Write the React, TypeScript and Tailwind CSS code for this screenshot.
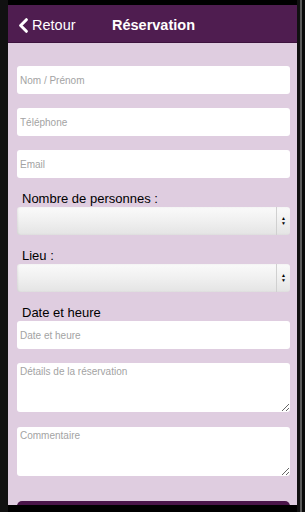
import { ChevronLeft } from "lucide-react";

function Field({ placeholder }: { placeholder: string }) {
  return (
    <input
      placeholder={placeholder}
      className="h-[28px] w-full shrink-0 rounded-[3px] bg-white px-[3px] text-[10px] text-gray-700 placeholder:text-[#a3a3a3] outline-none"
    />
  );
}

function Area({ placeholder }: { placeholder: string }) {
  return (
    <textarea
      placeholder={placeholder}
      className="h-[49px] w-full shrink-0 resize-y rounded-[3px] bg-white px-[3px] py-[2px] text-[10px] leading-[13px] text-gray-700 placeholder:text-[#a3a3a3] outline-none"
    />
  );
}

function Select() {
  return (
    <div className="flex h-[28px] w-full shrink-0 overflow-hidden rounded-[3px] bg-gradient-to-b from-[#fafafa] via-[#f0f0f0] to-[#e4e4e4] shadow-[inset_1px_0_2px_rgba(0,0,0,0.08)]">
      <div className="flex-1" />
      <div className="flex w-[14px] flex-col items-center justify-center border-l border-[#d0d0d0] text-[5px] leading-[5px] text-black">
        <span>▲</span>
        <span>▼</span>
      </div>
    </div>
  );
}

export default function App() {
  return (
    <div className="flex h-[512px] w-[305px] overflow-hidden bg-black font-['Liberation_Sans',Arial,sans-serif]">
      <div className="w-[8px] shrink-0 bg-[#111]" />
      <div className="flex w-[289px] shrink-0 flex-col">
        <div className="h-[5px] shrink-0 bg-black" />
        {/* Barre de titre */}
        <div className="relative flex h-[38px] shrink-0 items-center border-b border-[#3d123e] bg-[#4f1d50] pt-[4px]">
          <div className="flex items-center pl-[4px] text-white">
            <ChevronLeft size={23} strokeWidth={3.2} className="-mr-[3px]" />
            <span className="text-[14.5px] leading-none">Retour</span>
          </div>
          <span className="absolute left-[104px] text-[14.5px] font-bold text-white">Réservation</span>
        </div>
        {/* Formulaire */}
        <div className="flex min-h-0 flex-1 flex-col overflow-hidden bg-[#dfcde0] pl-[9px] pr-[7px] pt-[23px]">
          <div className="flex shrink-0 flex-col gap-[14px]">
            <Field placeholder="Nom / Prénom" />
            <Field placeholder="Téléphone" />
            <Field placeholder="Email" />
          </div>
          <label className="mt-[12px] shrink-0 pl-[5px] text-[13px] leading-[17px] text-black">Nombre de personnes :</label>
          <Select />
          <label className="mt-[12px] shrink-0 pl-[5px] text-[13px] leading-[17px] text-black">Lieu :</label>
          <Select />
          <label className="mt-[12px] shrink-0 pl-[5px] text-[13px] leading-[17px] text-black">Date et heure</label>
          <Field placeholder="Date et heure" />
          <div className="mt-[14px] flex shrink-0 flex-col gap-[15px]">
            <Area placeholder="Détails de la réservation" />
            <Area placeholder="Commentaire" />
          </div>
          <div className="mt-[25px] h-[10px] shrink-0 rounded-t-[5px] bg-[#4a1549]" />
        </div>
        <div className="h-[7px] shrink-0 bg-black" />
      </div>
      <div className="flex w-[8px] shrink-0">
        <div className="w-[3px] bg-[#111]" />
        <div className="w-[2px] bg-[#5a5a5a]" />
        <div className="w-[3px] bg-[#0a0a0a]" />
      </div>
    </div>
  );
}
